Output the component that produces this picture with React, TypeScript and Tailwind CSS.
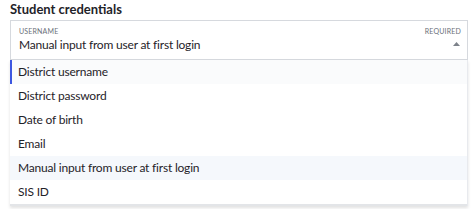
export default function App() {
  const options = [
    'District username',
    'District password',
    'Date of birth',
    'Email',
    'Manual input from user at first login',
    'SIS ID',
  ]

  return (
    <div className="w-[474px] h-[209px] bg-white overflow-hidden font-['Lato',sans-serif] text-[#1f2329]">
      <div className="pl-[10px] pr-[6px] pt-[1px]">
        <h3 className="text-[13px] font-bold leading-[16px] mb-[3px]">Student credentials</h3>

        {/* Select field */}
        <div className="border border-[#d6d9de] h-[40px] pl-[8px] pr-[6px] pt-[6px] flex justify-between">
          <div className="flex flex-col">
            <span className="text-[7px] leading-[8px] tracking-wide text-[#6b7079]">USERNAME</span>
            <span className="text-[12px] tracking-[-0.2px] leading-[16px] mt-[2px]">
              Manual input from user at first login
            </span>
          </div>
          <div className="flex flex-col items-end">
            <span className="text-[7px] leading-[8px] tracking-wide text-[#6b7079]">REQUIRED</span>
            <svg className="mt-[7px] mr-[1px]" width="7" height="4" viewBox="0 0 7 4">
              <path d="M0 4 L3.5 0 L7 4 Z" fill="#7d828a" />
            </svg>
          </div>
        </div>

        {/* Dropdown */}
        <div className="border-r border-[#e8eaee] shadow-[0_2px_3px_rgba(0,0,0,0.12)]">
          {options.map((opt, i) => (
            <div
              key={opt}
              className={`h-[24px] flex items-center text-[12px] tracking-[-0.2px] ${
                i === 0
                  ? 'border-l-[2px] border-[#3d57e0] pl-[6px] bg-[#fafbfc]'
                  : i === 4
                  ? 'pl-[8px] bg-[#f5f8fc]'
                  : 'pl-[8px]'
              }`}
            >
              {opt}
            </div>
          ))}
          <div className="h-[2px] bg-[#e3e5e8]" />
        </div>
      </div>
    </div>
  )
}
